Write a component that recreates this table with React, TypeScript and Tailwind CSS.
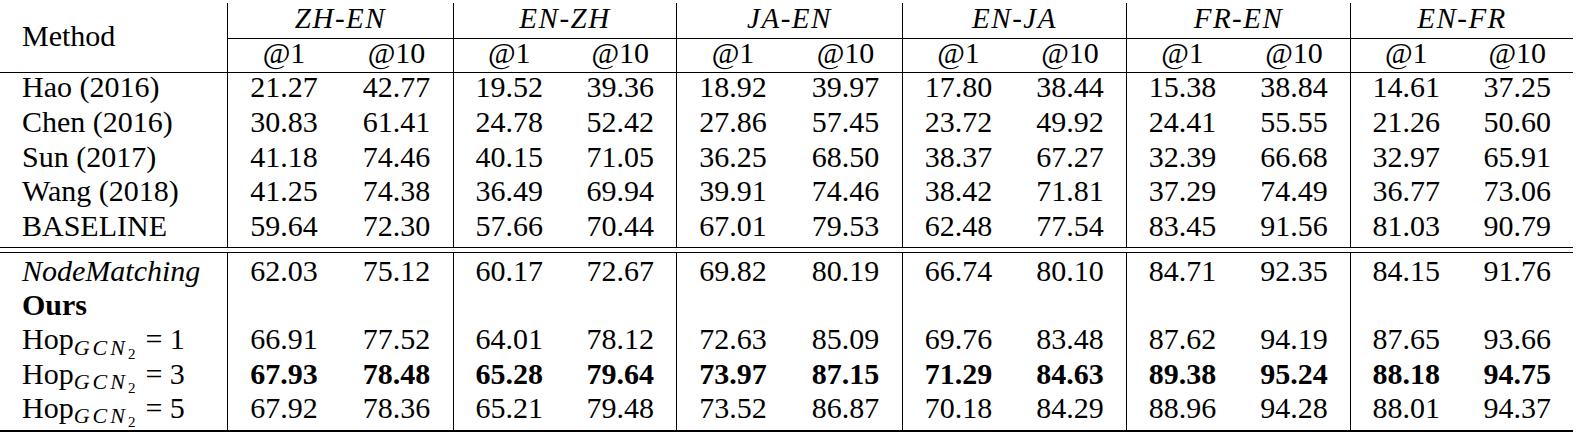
import React from "react";

const COLS =
  "grid grid-cols-[227px_113px_113px_111.5px_111.5px_113px_113px_112px_112px_112px_112px_111.5px_111.5px]";

const groups = ["ZH-EN", "EN-ZH", "JA-EN", "EN-JA", "FR-EN", "EN-FR"];

type Row = { label: React.ReactNode; vals: string[]; bold?: boolean };

const block1: Row[] = [
  { label: "Hao (2016)", vals: "21.27 42.77 19.52 39.36 18.92 39.97 17.80 38.44 15.38 38.84 14.61 37.25".split(" ") },
  { label: "Chen (2016)", vals: "30.83 61.41 24.78 52.42 27.86 57.45 23.72 49.92 24.41 55.55 21.26 50.60".split(" ") },
  { label: "Sun (2017)", vals: "41.18 74.46 40.15 71.05 36.25 68.50 38.37 67.27 32.39 66.68 32.97 65.91".split(" ") },
  { label: "Wang (2018)", vals: "41.25 74.38 36.49 69.94 39.91 74.46 38.42 71.81 37.29 74.49 36.77 73.06".split(" ") },
  { label: "BASELINE", vals: "59.64 72.30 57.66 70.44 67.01 79.53 62.48 77.54 83.45 91.56 81.03 90.79".split(" ") },
];

function Hop({ n }: { n: number }) {
  return (
    <span>
      Hop
      <sub className="italic text-[22px] tracking-[3px]">
        GCN
        <sub className="not-italic text-[15px] tracking-normal">2</sub>
      </sub>
      <span className="ml-[10px]">= {n}</span>
    </span>
  );
}

const hopRows: { row: Row; h: string }[] = [
  { row: { label: <Hop n={1} />, vals: "66.91 77.52 64.01 78.12 72.63 85.09 69.76 83.48 87.62 94.19 87.65 93.66".split(" ") }, h: "h-[34.2px]" },
  { row: { label: <Hop n={3} />, vals: "67.93 78.48 65.28 79.64 73.97 87.15 71.29 84.63 89.38 95.24 88.18 94.75".split(" "), bold: true }, h: "h-[34.2px]" },
  { row: { label: <Hop n={5} />, vals: "67.92 78.36 65.21 79.48 73.52 86.87 70.18 84.29 88.96 94.28 88.01 94.37".split(" ") }, h: "h-[36.2px]" },
];

function DataRow({
  row,
  rowClass,
  cellClass,
}: {
  row: Row;
  rowClass: string;
  cellClass: string;
}) {
  const vals = row.vals.length ? row.vals : Array(12).fill("");
  return (
    <div className={`${COLS} ${rowClass}`}>
      <div className={`pl-[22px] whitespace-nowrap ${cellClass}`}>{row.label}</div>
      {vals.map((v, i) => (
        <div
          key={i}
          className={`text-center ${cellClass} ${i % 2 === 0 ? "border-l border-black" : ""} ${
            row.bold ? "font-bold" : ""
          }`}
        >
          {v}
        </div>
      ))}
    </div>
  );
}

export default function App() {
  return (
    <div className="w-[1578px] h-[433px] bg-white text-black font-[family-name:Liberation_Serif,serif] text-[30px] pt-[3px]">
      <div className="w-[1573px]">
        {/* Header */}
        <div className={`${COLS} grid-rows-[36px_34px]`}>
          <div className="row-span-2 border-b border-black flex items-center pl-[22px] pb-[4px] leading-[28px]">
            Method
          </div>
          {groups.map((g) => (
            <div
              key={g}
              className="col-span-2 border-l border-b border-black text-center italic tracking-[1.5px] leading-[28px] pt-[1px] text-[29px]"
            >
              {g}
            </div>
          ))}
          {groups.map((g) => (
            <React.Fragment key={g + "s"}>
              <div className="border-l border-b border-black text-center leading-[28px]">@1</div>
              <div className="border-b border-black text-center leading-[28px]">@10</div>
            </React.Fragment>
          ))}
        </div>

        {/* Block 1 */}
        {block1.map((r, i) => (
          <DataRow key={i} row={r} rowClass="h-[34.8px]" cellClass="leading-[28px]" />
        ))}

        {/* Double rule */}
        <div className="h-[6px] border-y border-black" />

        {/* Block 2 */}
        <div className="border-b-2 border-black">
          <DataRow
            row={{
              label: <span className="italic">NodeMatching</span>,
              vals: "62.03 75.12 60.17 72.67 69.82 80.19 66.74 80.10 84.71 92.35 84.15 91.76".split(" "),
            }}
            rowClass="h-[38.2px]"
            cellClass="leading-[28px] pt-[4px]"
          />
          <DataRow
            row={{ label: <span className="font-bold">Ours</span>, vals: [] }}
            rowClass="h-[34.2px]"
            cellClass="leading-[28px]"
          />
          {hopRows.map((r, i) => (
            <DataRow key={i} row={r.row} rowClass={r.h} cellClass="leading-[28px]" />
          ))}
        </div>
      </div>
    </div>
  );
}
